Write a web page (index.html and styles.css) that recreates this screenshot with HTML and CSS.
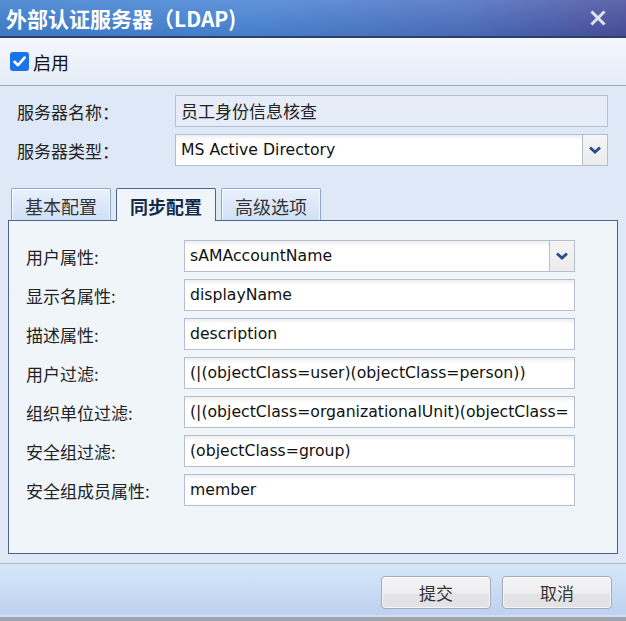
FILE: index.html
```html
<!DOCTYPE html>
<html lang="zh-CN">
<head>
<meta charset="utf-8">
<title>外部认证服务器（LDAP)</title>
<link rel="stylesheet" href="styles.css">
</head>
<body>
<div class="dialog">
  <div class="titlebar">
    <span class="title">外部认证服务器（LDAP)</span>
    <svg class="close" width="16" height="16" viewBox="0 0 16 16"><path d="M2.5 2.5 L13.5 13.5 M13.5 2.5 L2.5 13.5" stroke="#dfe4f0" stroke-width="3" stroke-linecap="square"/></svg>
  </div>
  <div class="enable-row">
    <span class="checkbox"><svg width="19" height="19" viewBox="0 0 19 19"><path d="M4.5 9.8 L8 13.2 L14.6 5.6" fill="none" stroke="#fff" stroke-width="2.6" stroke-linecap="round" stroke-linejoin="round"/></svg></span>
    <span class="enable-text">启用</span>
  </div>
  <div class="body">
    <div class="form-row top-row">
      <span class="label">服务器名称：</span>
      <div class="field disabled">员工身份信息核查</div>
    </div>
    <div class="form-row top-row">
      <span class="label">服务器类型：</span>
      <div class="field combo"><span class="value">MS Active Directory</span><span class="trigger"><svg width="14" height="10" viewBox="0 0 14 10"><path d="M2 2.5 L7 7 L12 2.5" fill="none" stroke="#2b4a8c" stroke-width="2.8"/></svg></span></div>
    </div>
    <div class="tabs">
      <div class="tab">基本配置</div>
      <div class="tab active">同步配置</div>
      <div class="tab">高级选项</div>
    </div>
    <div class="panel">
      <div class="form-row panel-row">
        <span class="label">用户属性:</span>
        <div class="field combo"><span class="value">sAMAccountName</span><span class="trigger"><svg width="14" height="10" viewBox="0 0 14 10"><path d="M2 2.5 L7 7 L12 2.5" fill="none" stroke="#2b4a8c" stroke-width="2.8"/></svg></span></div>
      </div>
      <div class="form-row panel-row">
        <span class="label">显示名属性:</span>
        <div class="field">displayName</div>
      </div>
      <div class="form-row panel-row">
        <span class="label">描述属性:</span>
        <div class="field">description</div>
      </div>
      <div class="form-row panel-row">
        <span class="label">用户过滤:</span>
        <div class="field">(|(objectClass=user)(objectClass=person))</div>
      </div>
      <div class="form-row panel-row">
        <span class="label">组织单位过滤:</span>
        <div class="field">(|(objectClass=organizationalUnit)(objectClass=</div>
      </div>
      <div class="form-row panel-row">
        <span class="label">安全组过滤:</span>
        <div class="field">(objectClass=group)</div>
      </div>
      <div class="form-row panel-row">
        <span class="label">安全组成员属性:</span>
        <div class="field">member</div>
      </div>
    </div>
  </div>
  <div class="footer">
    <button class="btn">提交</button>
    <button class="btn">取消</button>
  </div>
</div>
</body>
</html>
```
FILE: styles.css
```css
* { box-sizing: border-box; }
html, body { margin: 0; padding: 0; }
body {
  width: 626px;
  height: 621px;
  overflow: hidden;
  font-family: "Noto Sans CJK SC", "DejaVu Sans", sans-serif;
  color: #222;
  background: #dfe8f6;
}
.dialog {
  width: 626px;
  height: 621px;
  display: flex;
  flex-direction: column;
  background: #dfe8f6;
}
.titlebar {
  height: 38px;
  flex: none;
  display: flex;
  align-items: center;
  justify-content: space-between;
  padding: 0 20px 0 6px;
  background:
    linear-gradient(to bottom, rgba(255,255,255,0.12), rgba(0,0,0,0.06)),
    linear-gradient(to right, #3f7fd0 0%, #4a86d6 40%, #4d6fc0 75%, #4a4f9e 100%);
  border-bottom: 2px solid #2e3f64;
}
.title {
  color: #fff;
  font-size: 21px;
  font-weight: bold;
  font-family: "Noto Sans CJK SC", "DejaVu Sans", sans-serif;
  line-height: 24px;
}
.close { display: block; }
.enable-row {
  height: 48px;
  flex: none;
  display: flex;
  align-items: center;
  padding-left: 10px;
  gap: 4px;
  background: linear-gradient(to bottom, #f4f7fc, #e4ecf7);
  border-bottom: 1px solid #9aa8c0;
}
.checkbox {
  width: 19px;
  height: 19px;
  border-radius: 3px;
  background: #1a73e8;
  display: block;
}
.checkbox svg { display: block; }
.enable-text { font-size: 18px; line-height: 20px; color: #111; }
.body {
  flex: 1;
  padding: 9px 8px 0 8px;
  display: flex;
  flex-direction: column;
  border-bottom: 1px solid #a6b4cc;
}
.form-row {
  display: flex;
  align-items: center;
  height: 32px;
}
.top-row { padding: 0 10px 0 9px; margin-bottom: 7px; }
.label {
  font-size: 17px;
  color: #222;
  flex: none;
  width: 158px;
  white-space: nowrap;
}
.field {
  flex: 1;
  height: 32px;
  border: 1px solid #b5bdcf;
  background: linear-gradient(to bottom, #eeeeee 0, #ffffff 5px, #ffffff 100%);
  font-family: "DejaVu Sans", "Noto Sans CJK SC", sans-serif;
  font-size: 15.7px;
  line-height: 30px;
  padding-left: 5px;
  white-space: nowrap;
  overflow: hidden;
  color: #111;
}
.field.disabled {
  background: #e6edf8;
  border-color: #b8bfcc;
  font-family: "Noto Sans CJK SC", "DejaVu Sans", sans-serif;
  font-size: 17px;
  color: #222;
}
.field.combo {
  display: flex;
  padding-left: 0;
}
.field.combo .value { flex: 1; padding-left: 5px; overflow: hidden; }
.trigger {
  width: 25px;
  flex: none;
  border-left: 1px solid #b5bdcf;
  background: linear-gradient(to bottom, #f4f4f4, #ececec);
  display: flex;
  align-items: center;
  justify-content: center;
}
.trigger svg { display: block; }
.tabs {
  display: flex;
  gap: 5px;
  margin-top: 15px;
  padding-left: 3px;
  height: 32px;
  position: relative;
  z-index: 1;
}
.tab {
  width: 100px;
  height: 32px;
  border: 1px solid #8fa6c6;
  border-bottom: none;
  border-radius: 2px 2px 0 0;
  background: linear-gradient(to bottom, #e9f1fb, #cfe0f6);
  box-shadow: inset 0 1px 0 #fff, inset 1px 0 0 #f3f8fe, inset -1px 0 0 #f3f8fe;
  font-size: 18px;
  color: #333;
  text-align: center;
  line-height: 34px;
}
.tab.active {
  height: 33px;
  background: #f0f5fa;
  border-color: #4a6490;
  box-shadow: none;
  font-weight: bold;
  color: #15294b;
}
.panel {
  height: 334px;
  flex: none;
  border: 1px solid #4a6490;
  background: #f0f5fa;
  padding: 19px 42px 0 17px;
  display: flex;
  flex-direction: column;
  gap: 7px;
}
.footer {
  flex: none;
  height: 57px;
  background: linear-gradient(to bottom, #d6e7f6 0%, #bcd1f1 100%);
  border-bottom: 4px solid #9fa3ab;
  box-shadow: inset 0 -2px 0 #d2e0f5;
  display: flex;
  justify-content: flex-end;
  align-items: flex-start;
  gap: 11px;
  padding: 12px 14px 0 0;
}
.btn {
  width: 110px;
  height: 33px;
  border: 1px solid #a5abb6;
  border-radius: 4px;
  background: linear-gradient(to bottom, #f3f3f5 0%, #eeeef1 55%, #e3e3e6 56%, #e3e3e6 100%);
  box-shadow: inset 0 1px 0 #fff, inset 0 0 0 1px #f6f6f8;
  font-family: "Noto Sans CJK SC", sans-serif;
  font-size: 17px;
  color: #333;
  padding: 0;
  line-height: 30px;
}
```
